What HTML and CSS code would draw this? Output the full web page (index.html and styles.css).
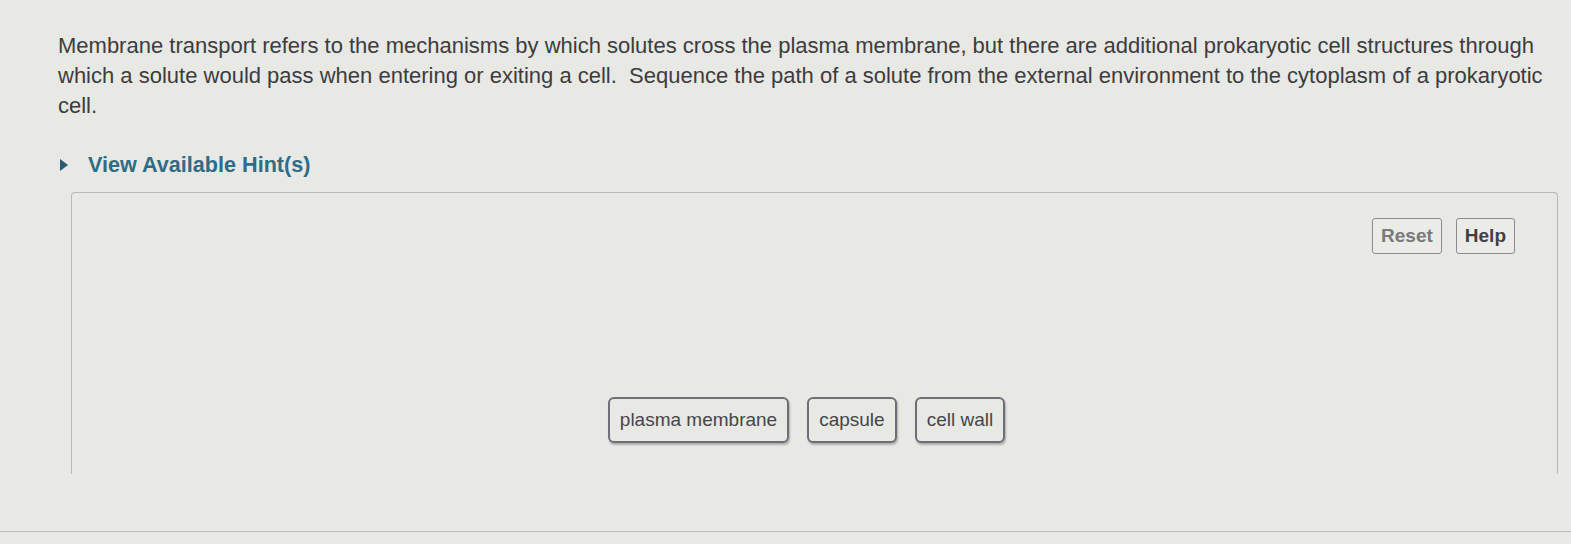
FILE: index.html
```html
<!DOCTYPE html>
<html lang="en">
<head>
    <meta charset="UTF-8">
    <title>Sequence the path of a solute</title>
    <link rel="stylesheet" href="styles.css">
</head>
<body>

<div class="question">
    <p class="prompt">Membrane transport refers to the mechanisms by which solutes cross the plasma membrane, but there are additional prokaryotic cell structures through which a solute would pass when entering or exiting a cell.&nbsp; Sequence the path of a solute from the external environment to the cytoplasm of a prokaryotic cell.</p>

    <div class="hint">
        <span class="hint-arrow"></span>
        <span class="hint-text">View Available Hint(s)</span>
    </div>

    <div class="workarea">
        <div class="toolbar">
            <button class="tool-btn disabled">Reset</button>
            <button class="tool-btn">Help</button>
        </div>
        <div class="chips">
            <div class="chip">plasma membrane</div>
            <div class="chip">capsule</div>
            <div class="chip">cell wall</div>
        </div>
    </div>
</div>

<div class="rule"></div>

</body>
</html>
```

FILE: styles.css
```css
* {
    box-sizing: border-box;
    margin: 0;
    padding: 0;
}
body {
    font-family: "Liberation Sans", Arial, sans-serif;
    background: #e8e8e4;
    color: #3c3c40;
    width: 1571px;
    height: 544px;
    overflow: hidden;
}
.question {
    padding: 31px 0 0 58px;
}
.prompt {
    width: 1500px;
    font-size: 22px;
    line-height: 30px;
}
.hint {
    display: flex;
    align-items: center;
    margin-top: 31px;
    margin-left: 2px;
}
.hint-arrow {
    width: 0;
    height: 0;
    border-top: 6px solid transparent;
    border-bottom: 6px solid transparent;
    border-left: 8px solid #2b5d72;
    margin-right: 20px;
}
.hint-text {
    font-size: 21.6px;
    font-weight: bold;
    color: #2f6c86;
}
.workarea {
    margin: 14px 0 0 13px;
    width: 1487px;
    height: 282px;
    border: 1px solid #b9bab7;
    border-bottom: none;
    border-radius: 4px 4px 0 0;
    padding: 25px 42px 0 0;
}
.toolbar {
    display: flex;
    justify-content: flex-end;
    gap: 14px;
}
.tool-btn {
    font-family: inherit;
    font-size: 19px;
    font-weight: bold;
    color: #3e3f48;
    background: #ebebe8;
    border: 1.5px solid #8c8c8c;
    border-radius: 3px;
    height: 36px;
    padding: 0 8px;
}
.tool-btn.disabled {
    color: #7a7a7a;
}
.chips {
    display: flex;
    justify-content: center;
    gap: 18px;
    margin-top: 143px;
    padding-left: 26px;
}
.chip {
    font-size: 19px;
    color: #45454a;
    background: #e8e8e5;
    border: 2px solid #6d6f78;
    border-radius: 6px;
    box-shadow: 1px 2px 2px rgba(0, 0, 0, 0.25);
    height: 46px;
    padding: 0 10px;
    display: flex;
    align-items: center;
}
.rule {
    margin-top: 57px;
    border-top: 1.5px solid #bdbebb;
}
```
